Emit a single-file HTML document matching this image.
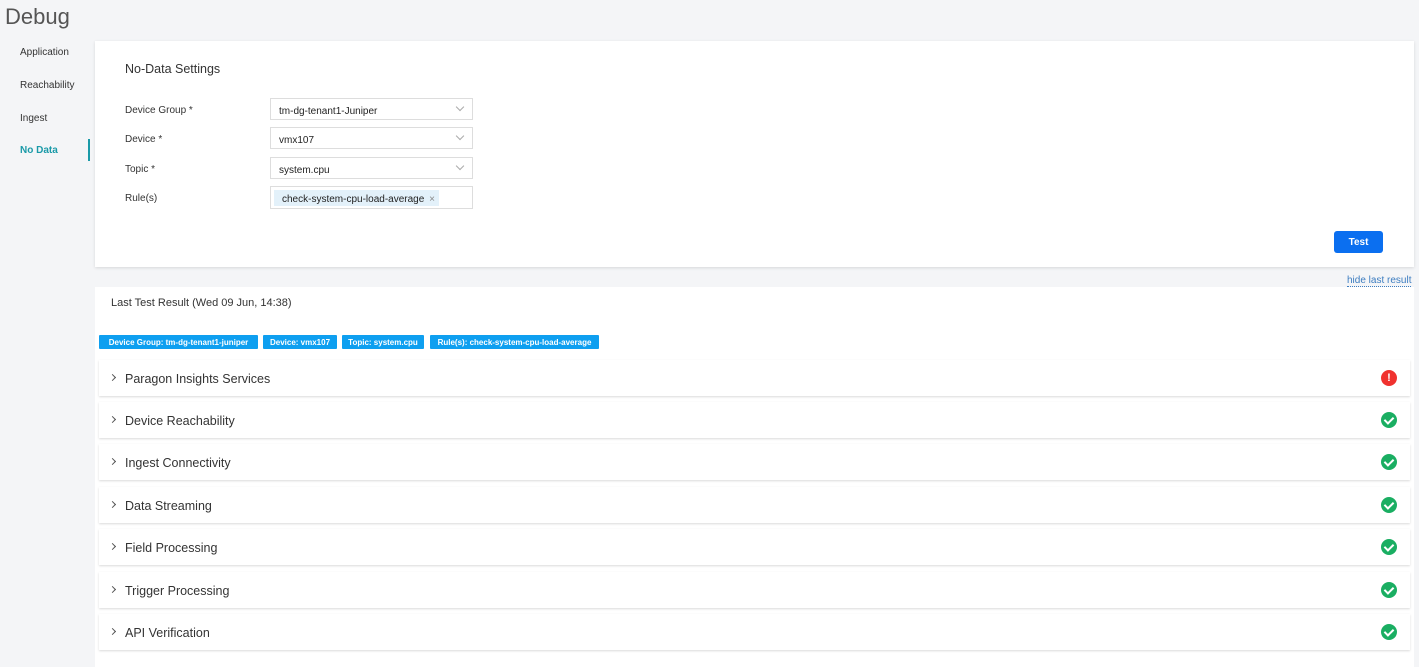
<!DOCTYPE html>
<html><head><style>
*{box-sizing:border-box;margin:0;padding:0}
body{width:1419px;height:662px;overflow:hidden;background:#f4f5f7;font-family:"Liberation Sans",sans-serif;color:#333;position:relative}
.abs{position:absolute}
h1{position:absolute;left:5px;top:4px;font-size:22px;font-weight:normal;color:#555}
.nav{position:absolute;left:20px;font-size:10px;color:#333}
.card{position:absolute;background:#fff;box-shadow:0 1px 3px rgba(0,0,0,.12)}
.lbl{position:absolute;left:125px;font-size:10px;color:#333}
.sel{position:absolute;left:270px;width:203px;height:22px;border:1px solid #ddd;font-size:10px;padding:6px 8px;color:#222}
.sel:after{content:"";position:absolute;right:9px;top:5px;width:5px;height:5px;border-right:1px solid #aaa;border-bottom:1px solid #aaa;transform:rotate(45deg)}
.tag{position:absolute;top:335px;height:14px;background:#0e9ff0;color:#fff;font-size:8px;font-weight:bold;padding:3px 0;text-align:center;border-radius:1px;white-space:nowrap}
.row{position:absolute;left:99px;width:1311px;height:36px;background:#fff;box-shadow:0 1px 2px rgba(0,0,0,.15)}
.row span{position:absolute;left:26px;top:12px;font-size:12.5px;color:#333}
.row i{position:absolute;left:11px;top:15px;width:5px;height:5px;border-right:1px solid #555;border-top:1px solid #555;transform:rotate(45deg)}
.ok{position:absolute;right:13px;top:10px;width:16px;height:16px;border-radius:50%;background:#1aae62}
.ok:after{content:"";position:absolute;left:5px;top:3px;width:4px;height:7px;border-right:2px solid #fff;border-bottom:2px solid #fff;transform:rotate(45deg)}
.err{position:absolute;right:13px;top:10px;width:16px;height:16px;border-radius:50%;background:#f0322f;color:#fff;font-size:11px;font-weight:bold;text-align:center;line-height:16px}
</style></head><body>
<h1>Debug</h1>
<div class="nav" style="top:47px">Application</div>
<div class="nav" style="top:80px">Reachability</div>
<div class="nav" style="top:113px">Ingest</div>
<div class="nav" style="top:145px;color:#1a9aa8;font-weight:bold">No Data</div>
<div class="abs" style="left:88px;top:139px;width:2px;height:22px;background:#1a9aa8"></div>

<div class="card" style="left:95px;top:41px;width:1319px;height:226px"></div>
<div class="abs" style="left:125px;top:62px;font-size:12.5px;color:#333">No-Data Settings</div>
<div class="lbl" style="top:105px">Device Group *</div>
<div class="lbl" style="top:134px">Device *</div>
<div class="lbl" style="top:164px">Topic *</div>
<div class="lbl" style="top:193px">Rule(s)</div>
<div class="sel" style="top:98px;padding-top:7px">tm-dg-tenant1-Juniper</div>
<div class="sel" style="top:127px;padding-top:7px">vmx107</div>
<div class="sel" style="top:157px;padding-top:7px">system.cpu</div>
<div class="abs" style="left:270px;top:186px;width:203px;height:23px;border:1px solid #ddd"></div>
<div class="abs" style="left:274px;top:190px;width:165px;height:16px;background:#e3f1fa;font-size:10px;padding:4px 0 0 8px;color:#222">check-system-cpu-load-average <span style="color:#888;margin-left:2px">×</span></div>
<div class="abs" style="left:1334px;top:231px;width:49px;height:22px;background:#0b6ff0;border-radius:3px;color:#fff;font-size:10px;font-weight:bold;text-align:center;line-height:23px">Test</div>
<div class="abs" style="left:1347px;top:275px;font-size:10px;color:#3d7dc0;border-bottom:1px dotted #3d7dc0;line-height:11px">hide last result</div>

<div class="card" style="left:95px;top:287px;width:1319px;height:380px;box-shadow:none"></div>
<div class="abs" style="left:111px;top:297px;font-size:11px;color:#333">Last Test Result (Wed 09 Jun, 14:38)</div>
<div class="tag" style="left:99px;width:159px">Device Group: tm-dg-tenant1-juniper</div>
<div class="tag" style="left:263px;width:74px">Device: vmx107</div>
<div class="tag" style="left:342px;width:82px">Topic: system.cpu</div>
<div class="tag" style="left:430px;width:169px">Rule(s): check-system-cpu-load-average</div>

<div class="row" style="top:360px"><i></i><span>Paragon Insights Services</span><div class="err">!</div></div>
<div class="row" style="top:402px"><i></i><span>Device Reachability</span><div class="ok"></div></div>
<div class="row" style="top:444px"><i></i><span>Ingest Connectivity</span><div class="ok"></div></div>
<div class="row" style="top:487px"><i></i><span>Data Streaming</span><div class="ok"></div></div>
<div class="row" style="top:529px"><i></i><span>Field Processing</span><div class="ok"></div></div>
<div class="row" style="top:572px"><i></i><span>Trigger Processing</span><div class="ok"></div></div>
<div class="row" style="top:614px"><i></i><span>API Verification</span><div class="ok"></div></div>
</body></html>
